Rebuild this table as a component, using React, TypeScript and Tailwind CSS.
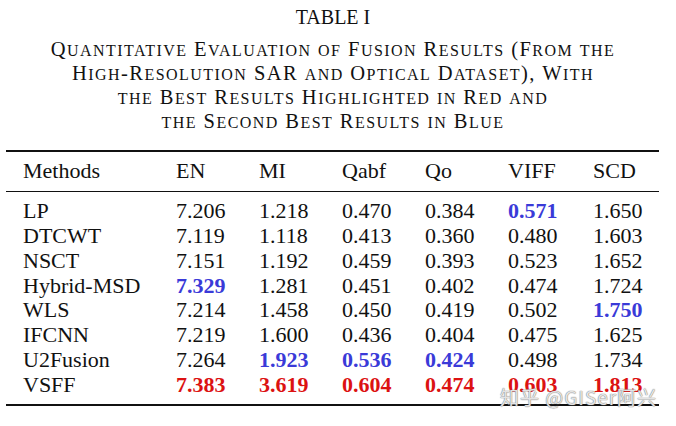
import React from "react";

type Cell = { v: string; c?: "r" | "b" };

const rows: [string, Cell[]][] = [
  ["LP", [{ v: "7.206" }, { v: "1.218" }, { v: "0.470" }, { v: "0.384" }, { v: "0.571", c: "b" }, { v: "1.650" }]],
  ["DTCWT", [{ v: "7.119" }, { v: "1.118" }, { v: "0.413" }, { v: "0.360" }, { v: "0.480" }, { v: "1.603" }]],
  ["NSCT", [{ v: "7.151" }, { v: "1.192" }, { v: "0.459" }, { v: "0.393" }, { v: "0.523" }, { v: "1.652" }]],
  ["Hybrid-MSD", [{ v: "7.329", c: "b" }, { v: "1.281" }, { v: "0.451" }, { v: "0.402" }, { v: "0.474" }, { v: "1.724" }]],
  ["WLS", [{ v: "7.214" }, { v: "1.458" }, { v: "0.450" }, { v: "0.419" }, { v: "0.502" }, { v: "1.750", c: "b" }]],
  ["IFCNN", [{ v: "7.219" }, { v: "1.600" }, { v: "0.436" }, { v: "0.404" }, { v: "0.475" }, { v: "1.625" }]],
  ["U2Fusion", [{ v: "7.264" }, { v: "1.923", c: "b" }, { v: "0.536", c: "b" }, { v: "0.424", c: "b" }, { v: "0.498" }, { v: "1.734" }]],
  ["VSFF", [{ v: "7.383", c: "r" }, { v: "3.619", c: "r" }, { v: "0.604", c: "r" }, { v: "0.474", c: "r" }, { v: "0.603", c: "r" }, { v: "1.813", c: "r" }]],
];

const headers = ["Methods", "EN", "MI", "Qabf", "Qo", "VIFF", "SCD"];
const grid = "grid grid-cols-[153px_83px_83px_83px_83px_85px_1fr]";

const captionLines = [
  "Quantitative Evaluation of Fusion Results (From the",
  "High-Resolution SAR and Optical Dataset), With",
  "the Best Results Highlighted in Red and",
  "the Second Best Results in Blue",
];

function SmallCaps({ text }: { text: string }) {
  const parts: { s: string; small: boolean }[] = [];
  for (const ch of text) {
    const small = ch >= "a" && ch <= "z";
    const last = parts[parts.length - 1];
    if (last && last.small === small) last.s += ch;
    else parts.push({ s: ch, small });
  }
  return (
    <div className="h-[24px] leading-[24px] tracking-[1.45px] whitespace-nowrap">
      {parts.map((p, i) =>
        p.small ? (
          <span key={i} className="text-[16px] leading-none">
            {p.s.toUpperCase()}
          </span>
        ) : (
          <span key={i} className="leading-none">{p.s}</span>
        )
      )}
    </div>
  );
}

function CellText({ cell }: { cell: Cell }) {
  if (cell.c === "r") return <span className="font-bold text-[#dc1212]">{cell.v}</span>;
  if (cell.c === "b") return <span className="font-bold text-[#3a3ad8]">{cell.v}</span>;
  return <span>{cell.v}</span>;
}

export default function App() {
  return (
    <div className="relative w-[676px] h-[426px] bg-white text-[#111] overflow-hidden font-['Liberation_Serif','Times_New_Roman',serif]">
      <div className="w-[666px]">
        <div className="pt-[5px] text-center text-[20px] leading-[24px]">TABLE I</div>
        <div className="mt-[8px] text-center text-[20.5px]">
          {captionLines.map((l) => (
            <SmallCaps key={l} text={l} />
          ))}
        </div>
      </div>
      <div className="mt-[17px] ml-[6px] w-[653px] text-[22px] leading-[25px]">
        <div className="h-[1.5px] bg-[#111]" />
        <div className={`${grid} pl-[17px] pt-[6px] pb-[8px]`}>
          {headers.map((h) => (
            <div key={h}>{h}</div>
          ))}
        </div>
        <div className="h-[1.5px] bg-[#111]" />
        <div className="pl-[17px] pt-[6px] pb-[7px]">
          {rows.map(([name, cells]) => (
            <div key={name} className={`${grid} h-[24.86px]`}>
              <div>{name}</div>
              {cells.map((c, i) => (
                <div key={i}>
                  <CellText cell={c} />
                </div>
              ))}
            </div>
          ))}
        </div>
        <div className="h-[2px] bg-[#111]" />
      </div>
      <div className="absolute left-[500px] top-[386px] text-[19px] leading-[22px] tracking-[1px] text-white/80 font-['Noto_Sans_CJK_SC','Noto_Sans',sans-serif] [text-shadow:0_0_1px_#777,0_0_1px_#777]">
        知乎 @GISer阿兴
      </div>
    </div>
  );
}
